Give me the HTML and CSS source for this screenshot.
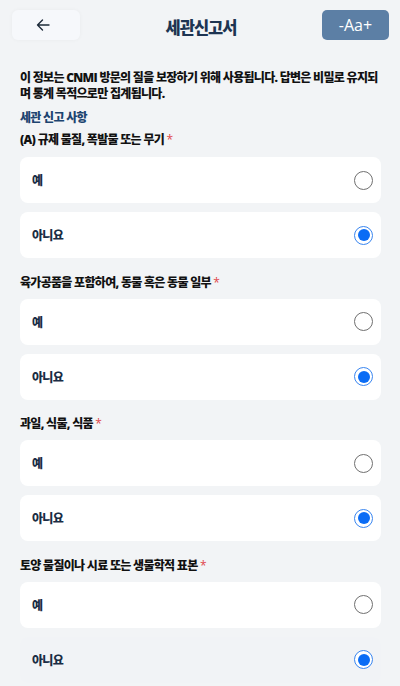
FILE: index.html
```html
<!DOCTYPE html>
<html lang="ko">
<head>
<meta charset="utf-8">
<link rel="stylesheet" href="styles.css">
</head>
<body>
<header class="topbar">
  <button class="back" aria-label="뒤로">
    <svg width="16" height="16" viewBox="0 0 16 16"><path d="M14 8H2.5M7.5 3L2.5 8l5 5" fill="none" stroke="#1d2b3a" stroke-width="1.4" stroke-linecap="round" stroke-linejoin="round"/></svg>
  </button>
  <h1 class="title">세관신고서</h1>
  <button class="fontsize">-Aa+</button>
</header>
<main class="content">
  <p class="intro">이 정보는 CNMI 방문의 질을 보장하기 위해 사용됩니다. 답변은 비밀로 유지되며 통계 목적으로만 집계됩니다.</p>
  <h2 class="section">세관 신고 사항</h2>

  <section class="question">
    <h3 class="qlabel">(A) 규제 물질, 폭발물 또는 무기 <span class="req">*</span></h3>
    <label class="option"><span>예</span><span class="radio"></span></label>
    <label class="option"><span>아니요</span><span class="radio on"></span></label>
  </section>

  <section class="question">
    <h3 class="qlabel">육가공품을 포함하여, 동물 혹은 동물 일부 <span class="req">*</span></h3>
    <label class="option"><span>예</span><span class="radio"></span></label>
    <label class="option"><span>아니요</span><span class="radio on"></span></label>
  </section>

  <section class="question">
    <h3 class="qlabel">과일, 식물, 식품 <span class="req">*</span></h3>
    <label class="option"><span>예</span><span class="radio"></span></label>
    <label class="option"><span>아니요</span><span class="radio on"></span></label>
  </section>

  <section class="question">
    <h3 class="qlabel">토양 물질이나 시료 또는 생물학적 표본 <span class="req">*</span></h3>
    <label class="option"><span>예</span><span class="radio"></span></label>
    <label class="option hover"><span>아니요</span><span class="radio on"></span></label>
  </section>
</main>
</body>
</html>
```

FILE: styles.css
```css
* { box-sizing: border-box; }
html, body { margin: 0; padding: 0; }
body {
  background: #f2f4f6;
  font-family: "Open Sans", "Noto Sans CJK KR", sans-serif;
  color: #111;
  overflow: hidden;
}
.topbar {
  display: flex;
  align-items: center;
  justify-content: space-between;
  padding: 10px 11px 0 12px;
  height: 40px;
}
.back {
  width: 68px;
  height: 30px;
  border: none;
  border-radius: 6px;
  background: #f6f8fb;
  box-shadow: 0 0 4px rgba(0,0,0,0.04);
  display: flex;
  align-items: center;
  justify-content: center;
  padding: 0;
}
.back svg { margin-left: -7px; }
.title {
  margin: 4px 0 0;
  font-size: 16.5px;
  letter-spacing: -1px;
  font-weight: 900;
  color: #1d3452;
  font-family: "Noto Sans CJK KR", sans-serif;
}
.fontsize {
  width: 67px;
  height: 30px;
  border: none;
  border-radius: 5px;
  background: #5c7fa5;
  color: #fff;
  font-family: "Open Sans", sans-serif;
  font-size: 16px;
  padding: 0;
}
.content {
  padding: 30px 19px 0 20px;
}
.intro {
  margin: 0;
  font-size: 12px;
  letter-spacing: -0.7px;
  line-height: 16px;
  font-weight: 900;
  color: #111;
  word-break: break-all;
}
.section {
  margin: 7px 0 0;
  font-size: 12px;
  letter-spacing: -0.7px;
  line-height: 17px;
  font-weight: 900;
  color: #1d4470;
}
.question { margin-top: 5px; }
.question + .question { margin-top: 15.5px; }
.qlabel {
  margin: 0 0 9px;
  font-size: 12px;
  letter-spacing: -0.7px;
  line-height: 17px;
  font-weight: 900;
  color: #111;
}
.question + .question .qlabel { margin-bottom: 8px; }
.req { color: #e0474c; font-weight: 400; }
.option {
  display: flex;
  align-items: center;
  justify-content: space-between;
  height: 46px;
  background: #fff;
  border-radius: 8px;
  padding: 0 8px 0 12px;
  font-size: 12px;
  letter-spacing: -0.7px;
  font-weight: 900;
  color: #1b2d45;
}
.option + .option { margin-top: 9px; }
.option.hover { background: #f1f3f6; }
.radio {
  width: 19px;
  height: 19px;
  border-radius: 50%;
  border: 1px solid #707070;
  background: #fff;
  position: relative;
}
.radio.on {
  border: 1.5px solid #3a86f0;
}
.radio.on::after {
  content: "";
  position: absolute;
  inset: 2.5px;
  border-radius: 50%;
  background: #0a6cf5;
}
```
